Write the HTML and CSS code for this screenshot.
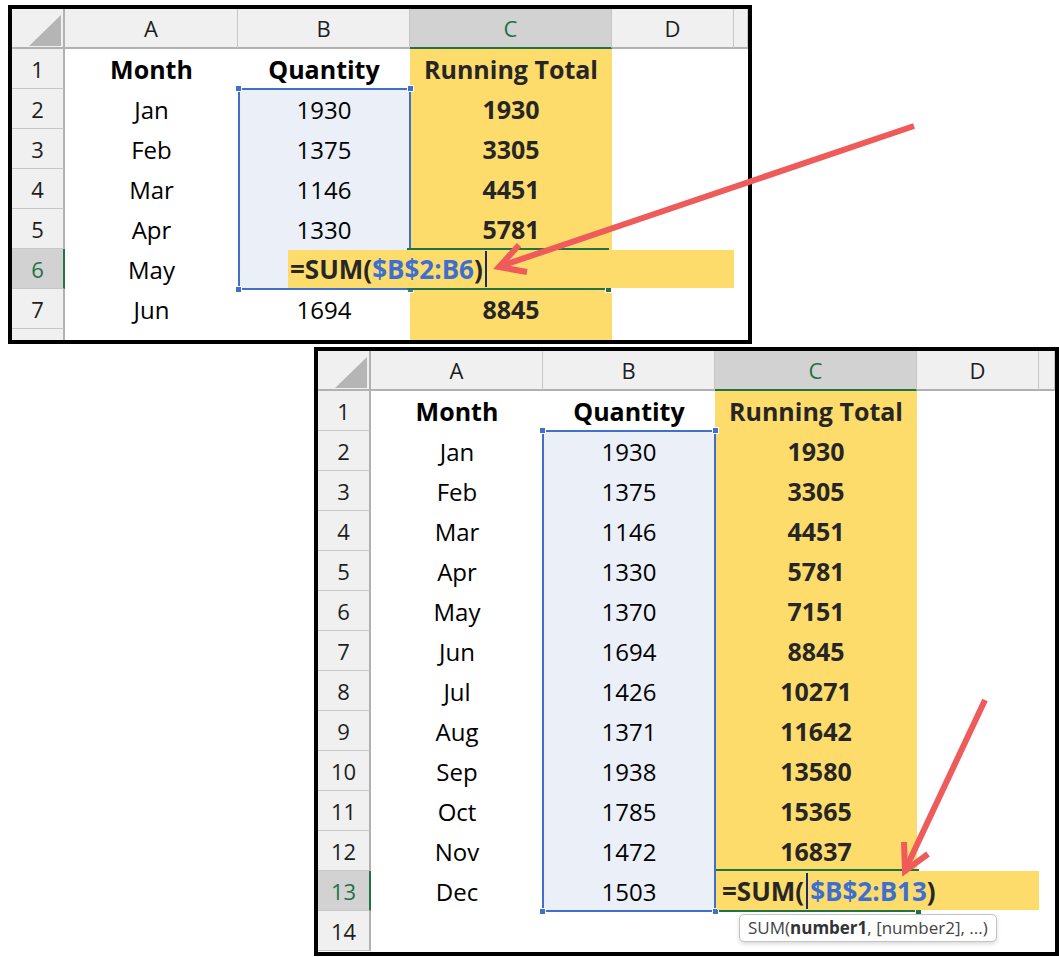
FILE: index.html
```html
<!DOCTYPE html>
<html lang="en">
<head>
    <meta charset="UTF-8">
    <title>Running Total with SUM</title>
    <link rel="stylesheet" href="styles.css">
</head>
<body>
<div class="stage">

    <!-- First capture: typing the formula in C6 -->
    <div class="sheet sheet-first">
        <div class="grid">
            <div class="corner"></div>
            <div class="col-head">A</div>
            <div class="col-head">B</div>
            <div class="col-head is-active">C</div>
            <div class="col-head">D</div>
            <div class="col-head"></div>

            <div class="row-head">1</div>
            <div class="cell bold">Month</div>
            <div class="cell bold">Quantity</div>
            <div class="cell total">Running Total</div>
            <div class="cell"></div><div class="cell"></div>

            <div class="row-head">2</div>
            <div class="cell">Jan</div>
            <div class="cell in-range">1930</div>
            <div class="cell total">1930</div>
            <div class="cell"></div><div class="cell"></div>

            <div class="row-head">3</div>
            <div class="cell">Feb</div>
            <div class="cell in-range">1375</div>
            <div class="cell total">3305</div>
            <div class="cell"></div><div class="cell"></div>

            <div class="row-head">4</div>
            <div class="cell">Mar</div>
            <div class="cell in-range">1146</div>
            <div class="cell total">4451</div>
            <div class="cell"></div><div class="cell"></div>

            <div class="row-head">5</div>
            <div class="cell">Apr</div>
            <div class="cell in-range">1330</div>
            <div class="cell total">5781</div>
            <div class="cell"></div><div class="cell"></div>

            <div class="row-head is-active">6</div>
            <div class="cell">May</div>
            <div class="cell in-range"></div>
            <div class="cell total"></div>
            <div class="cell"></div><div class="cell"></div>

            <div class="row-head">7</div>
            <div class="cell">Jun</div>
            <div class="cell">1694</div>
            <div class="cell total">8845</div>
            <div class="cell"></div><div class="cell"></div>

            <div class="row-head">8</div>
            <div class="cell">Jul</div>
            <div class="cell">1426</div>
            <div class="cell total">10271</div>
            <div class="cell"></div><div class="cell"></div>

            <div class="range range-first">
                <span class="handle tl"></span><span class="handle tr"></span>
                <span class="handle bl"></span><span class="handle br"></span>
            </div>
            <div class="active-cell active-first"><span class="fill-handle"></span></div>
            <div class="editor editor-first">=SUM(<span class="ref">$B$2:B6</span>)<span class="caret"></span></div>
        </div>
    </div>

    <!-- Second capture: formula in C13 -->
    <div class="sheet sheet-second">
        <div class="grid">
            <div class="corner"></div>
            <div class="col-head">A</div>
            <div class="col-head">B</div>
            <div class="col-head is-active">C</div>
            <div class="col-head">D</div>
            <div class="col-head"></div>

            <div class="row-head">1</div>
            <div class="cell bold">Month</div>
            <div class="cell bold">Quantity</div>
            <div class="cell total">Running Total</div>
            <div class="cell"></div><div class="cell"></div>

            <div class="row-head">2</div>
            <div class="cell">Jan</div>
            <div class="cell in-range">1930</div>
            <div class="cell total">1930</div>
            <div class="cell"></div><div class="cell"></div>

            <div class="row-head">3</div>
            <div class="cell">Feb</div>
            <div class="cell in-range">1375</div>
            <div class="cell total">3305</div>
            <div class="cell"></div><div class="cell"></div>

            <div class="row-head">4</div>
            <div class="cell">Mar</div>
            <div class="cell in-range">1146</div>
            <div class="cell total">4451</div>
            <div class="cell"></div><div class="cell"></div>

            <div class="row-head">5</div>
            <div class="cell">Apr</div>
            <div class="cell in-range">1330</div>
            <div class="cell total">5781</div>
            <div class="cell"></div><div class="cell"></div>

            <div class="row-head">6</div>
            <div class="cell">May</div>
            <div class="cell in-range">1370</div>
            <div class="cell total">7151</div>
            <div class="cell"></div><div class="cell"></div>

            <div class="row-head">7</div>
            <div class="cell">Jun</div>
            <div class="cell in-range">1694</div>
            <div class="cell total">8845</div>
            <div class="cell"></div><div class="cell"></div>

            <div class="row-head">8</div>
            <div class="cell">Jul</div>
            <div class="cell in-range">1426</div>
            <div class="cell total">10271</div>
            <div class="cell"></div><div class="cell"></div>

            <div class="row-head">9</div>
            <div class="cell">Aug</div>
            <div class="cell in-range">1371</div>
            <div class="cell total">11642</div>
            <div class="cell"></div><div class="cell"></div>

            <div class="row-head">10</div>
            <div class="cell">Sep</div>
            <div class="cell in-range">1938</div>
            <div class="cell total">13580</div>
            <div class="cell"></div><div class="cell"></div>

            <div class="row-head">11</div>
            <div class="cell">Oct</div>
            <div class="cell in-range">1785</div>
            <div class="cell total">15365</div>
            <div class="cell"></div><div class="cell"></div>

            <div class="row-head">12</div>
            <div class="cell">Nov</div>
            <div class="cell in-range">1472</div>
            <div class="cell total">16837</div>
            <div class="cell"></div><div class="cell"></div>

            <div class="row-head is-active">13</div>
            <div class="cell">Dec</div>
            <div class="cell in-range">1503</div>
            <div class="cell total"></div>
            <div class="cell"></div><div class="cell"></div>

            <div class="row-head">14</div>
            <div class="cell"></div>
            <div class="cell"></div>
            <div class="cell"></div>
            <div class="cell"></div><div class="cell"></div>

            <div class="active-cell active-second"><span class="fill-handle"></span></div>
            <div class="range range-second">
                <span class="handle tl"></span><span class="handle tr"></span>
                <span class="handle bl"></span><span class="handle br"></span>
            </div>
            <div class="editor editor-second">=SUM(<span class="caret"></span><span class="ref">$B$2:B13</span>)</div>
            <div class="tooltip">SUM(<b>number1</b>, [number2], ...)</div>
        </div>
    </div>

    <svg class="arrows" width="1059" height="957" viewBox="0 0 1059 957">
        <g fill="none" stroke="#ef5a5a" stroke-width="6">
            <line x1="914" y1="126" x2="504" y2="265"/>
            <polyline points="519,245 499,267 527,272" stroke-miterlimit="10"/>
            <line x1="985" y1="700" x2="907" y2="866"/>
            <polyline points="904,842 905,871 928,854" stroke-miterlimit="10"/>
        </g>
    </svg>
</div>
</body>
</html>
```

FILE: styles.css
```css
:root {
    --head-bg: #f0f0f0;
    --head-active: #d2d2d2;
    --head-line: #b1b1b1;
    --head-sep: #c6c6c6;
    --excel-green: #217346;
    --range-blue: #3f70cc;
    --range-fill: #ebf0f8;
    --gold: #fddc6b;
}

body {
    margin: 0;
    background: #fff;
    color: #000;
    font-family: "Open Sans", "Noto Sans", sans-serif;
}

.stage {
    position: relative;
    width: 1059px;
    height: 957px;
    overflow: hidden;
}

/* Screenshot frames */
.sheet {
    position: absolute;
    border: 4px solid #000;
    background: #fff;
    overflow: hidden;
}

.sheet-first {
    left: 8px;
    top: 5px;
    width: 736px;
    height: 331px;
}

.sheet-second {
    left: 314px;
    top: 347px;
    width: 737px;
    height: 601px;
}

.grid {
    position: relative;
    display: grid;
    grid-template-columns: 53px 173px 172px 202px 122px 1fr;
    grid-auto-rows: 40px;
}

.sheet-second .grid {
    grid-template-columns: 53px 172px 172px 202px 122px 1fr;
}

/* Headers */
.corner,
.col-head,
.row-head {
    box-sizing: border-box;
    background: var(--head-bg);
    display: flex;
    align-items: center;
    justify-content: center;
    color: #1e1e1e;
    font-size: 22px;
}

.corner {
    position: relative;
    border-right: 2px solid var(--head-line);
    border-bottom: 2px solid var(--head-line);
}

.corner::after {
    content: "";
    position: absolute;
    left: 17px;
    top: 6px;
    width: 32px;
    height: 31px;
    background: #b5b5b5;
    clip-path: polygon(100% 0, 100% 100%, 0 100%);
}

.col-head {
    border-right: 1px solid var(--head-sep);
    border-bottom: 2px solid var(--head-line);
}

.row-head {
    border-right: 2px solid var(--head-line);
    border-bottom: 1px solid var(--head-sep);
}

.col-head.is-active {
    background: var(--head-active);
    color: var(--excel-green);
    border-bottom-color: var(--excel-green);
}

.row-head.is-active {
    background: var(--head-active);
    color: var(--excel-green);
    border-right-color: var(--excel-green);
}

/* Cells */
.cell {
    display: flex;
    align-items: center;
    justify-content: center;
    font-size: 24px;
    white-space: nowrap;
}

.cell.bold {
    font-size: 25px;
    font-weight: 700;
}

.cell.total {
    background: var(--gold);
    font-size: 25px;
    font-weight: 700;
    color: #262626;
}

.cell.in-range {
    background: var(--range-fill);
}

/* Selection overlays */
.range {
    position: absolute;
    box-sizing: border-box;
    border: 2px solid var(--range-blue);
}

.range-first {
    left: 226px;
    top: 79px;
    width: 173px;
    height: 202px;
}

.range-second {
    left: 224px;
    top: 79px;
    width: 174px;
    height: 482px;
}

.handle {
    position: absolute;
    width: 5px;
    height: 5px;
    background: var(--range-blue);
    border: 1px solid #fff;
}

.handle.tl { left: -5px; top: -5px; }
.handle.tr { right: -5px; top: -5px; }
.handle.bl { left: -5px; bottom: -5px; }
.handle.br { right: -5px; bottom: -5px; }

.active-cell {
    position: absolute;
    box-sizing: border-box;
    border: 2px solid var(--excel-green);
}

.active-first {
    left: 395px;
    top: 239px;
    width: 202px;
    height: 42px;
}

.active-second {
    left: 396px;
    top: 518px;
    width: 205px;
    height: 43px;
}

.fill-handle {
    position: absolute;
    right: -5px;
    bottom: -5px;
    width: 5px;
    height: 5px;
    background: var(--excel-green);
    border: 1px solid #fff;
}

/* In-cell formula editor */
.editor {
    position: absolute;
    box-sizing: border-box;
    display: flex;
    align-items: center;
    background: var(--gold);
    font-size: 26px;
    font-weight: 700;
    color: #262626;
    white-space: nowrap;
}

.editor .ref {
    color: #3d6fd1;
}

.editor-first {
    left: 276px;
    top: 241px;
    width: 446px;
    height: 38px;
    padding-left: 2px;
}

.editor-second {
    left: 399px;
    top: 520px;
    width: 322px;
    height: 39px;
    padding-left: 5px;
}

.caret {
    width: 2px;
    height: 36px;
    margin: 0 2px;
    background: #1d2a66;
}

.tooltip {
    position: absolute;
    left: 421px;
    top: 563px;
    box-sizing: border-box;
    height: 28px;
    padding: 0 8px;
    border: 1px solid #c3c3c3;
    border-radius: 5px;
    background: #fff;
    box-shadow: 0 2px 4px rgba(0, 0, 0, 0.15);
    font-size: 17px;
    line-height: 26px;
    color: #444;
    white-space: nowrap;
}

.tooltip b {
    color: #333;
}

/* Annotation arrows */
.arrows {
    position: absolute;
    left: 0;
    top: 0;
    pointer-events: none;
}
```
